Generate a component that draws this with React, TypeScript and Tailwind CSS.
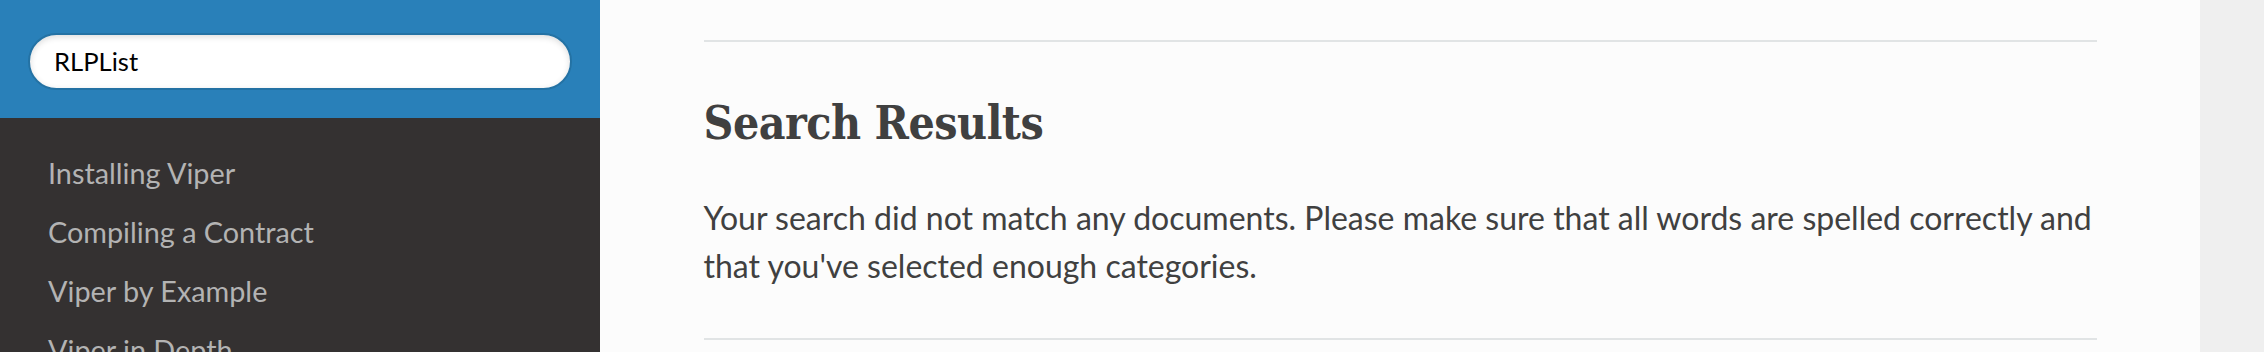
import React from "react";

const navItems = [
  "Installing Viper",
  "Compiling a Contract",
  "Viper by Example",
  "Viper in Depth",
];

export default function App() {
  return (
    <div className="flex w-[2264px] h-[352px] overflow-hidden bg-[#efefef] font-['Lato','Liberation_Sans',sans-serif]">
      <nav className="w-[600px] shrink-0 bg-[#343131] flex flex-col">
        <div className="h-[118px] shrink-0 bg-[#2980b9] px-[28px] pt-[33px]">
          <div className="h-[57px] rounded-full border-2 border-[#2472a4] bg-white shadow-[inset_0_2px_6px_#dddddd] flex items-center pl-[24px] text-[25.6px] text-black">
            RLPList
          </div>
        </div>
        <ul className="mt-[25px]">
          {navItems.map((t) => (
            <li
              key={t}
              className="py-[11.65px] pl-[48px] text-[28.8px] leading-[36px] text-[#b3b3b3]"
            >
              {t}
            </li>
          ))}
        </ul>
      </nav>
      <main className="w-[1600px] shrink-0 bg-[#fcfcfc] px-[103.5px] pt-[40px] text-[#404040]">
        <hr className="border-0 border-t-2 border-[#e1e4e5]" />
        <h1 className="mt-[53px] mb-[43px] h-[56px] text-[46px] leading-[56px] font-bold tracking-[-0.5px] font-['DejaVu_Serif_Condensed','DejaVu_Serif',serif] font-stretch-condensed">
          Search Results
        </h1>
        <p className="text-[32px] leading-[48px] mb-[48px]">
          Your search did not match any documents. Please make sure that all
          words are spelled correctly and that you've selected enough
          categories.
        </p>
        <hr className="border-0 border-t-2 border-[#e1e4e5]" />
      </main>
    </div>
  );
}
